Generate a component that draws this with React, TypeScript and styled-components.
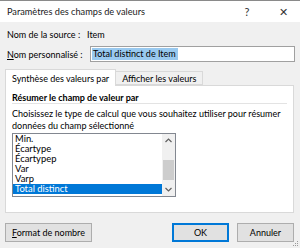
import React from 'react';
import styled, { createGlobalStyle } from 'styled-components';

const GlobalStyle = createGlobalStyle`
  html, body {
    margin: 0;
    padding: 0;
    background: #f0f0f0;
  }
  * {
    box-sizing: border-box;
  }
`;

const Window = styled.div`
  width: 300px;
  height: 248px;
  display: flex;
  flex-direction: column;
  background: #f0f0f0;
  border-top: 1px solid #8a8a8a;
  font-family: Lato, "Open Sans", sans-serif;
  font-size: 9px;
  color: #000;
  position: relative;
  overflow: hidden;
  white-space: nowrap;
`;

const TitleBar = styled.div`
  height: 21px;
  flex-shrink: 0;
  background: #fff;
  display: flex;
  align-items: center;
  padding: 0 3px 0 7px;
`;

const Title = styled.span`
  flex: 1;
  font-size: 9.2px;
  color: #1a1a1a;
`;

const TitleButton = styled.span<{ $w: number }>`
  width: ${p => p.$w}px;
  text-align: center;
  font-size: 11px;
  color: #333;
`;

const TitleGap = styled.div`
  width: 12px;
`;

const Body = styled.div`
  flex: 1;
  display: flex;
  flex-direction: column;
  padding: 0 5px;
`;

const FieldRow = styled.div<{ $h: number }>`
  height: ${p => p.$h}px;
  display: flex;
  align-items: center;
  padding-left: 2px;
`;

const Label = styled.span<{ $w: number }>`
  width: ${p => p.$w}px;
  flex-shrink: 0;
`;

const U = styled.span`
  text-decoration: underline;
`;

const Input = styled.div`
  flex: 1;
  height: 16px;
  background: #fff;
  border: 1px solid #a0a0a0;
  display: flex;
  align-items: center;
  padding-left: 1px;
`;

const Selected = styled.span`
  background: #99c9ef;
  line-height: 12px;
  padding: 0 2px 0 1px;
`;

const Tabs = styled.div`
  display: flex;
  align-items: flex-end;
  height: 17px;
  margin-top: 6px;
`;

const Tab = styled.div<{ $active?: boolean }>`
  height: ${p => (p.$active ? 17 : 14)}px;
  padding: 0 6px;
  display: flex;
  align-items: center;
  background: ${p => (p.$active ? '#fff' : '#f0f0f0')};
  border: 1px solid #d9d9d9;
  border-bottom: ${p => (p.$active ? 'none' : '1px solid #d9d9d9')};
  margin-left: ${p => (p.$active ? 0 : -1)}px;
  position: relative;
  z-index: ${p => (p.$active ? 1 : 0)};
  margin-bottom: ${p => (p.$active ? -1 : 0)}px;
`;

const Panel = styled.div`
  height: 128px;
  margin-right: 1px;
  background: #fff;
  border: 1px solid #d9d9d9;
  padding: 6px 6px 0 6px;
  display: flex;
  flex-direction: column;
`;

const Heading = styled.div`
  font-weight: 700;
  border-bottom: 1px solid #e3e3e3;
  line-height: 11px;
`;

const Description = styled.div`
  margin-top: 4px;
  line-height: 12px;
  white-space: normal;
`;

const ListBox = styled.div`
  margin-top: 1px;
  width: 164px;
  height: 64px;
  border: 1px solid #828790;
  display: flex;
`;

const Items = styled.div`
  flex: 1;
`;

const Item = styled.div<{ $selected?: boolean }>`
  height: 10px;
  line-height: 10px;
  font-size: 9.4px;
  padding-left: 2px;
  background: ${p => (p.$selected ? '#0078d7' : 'transparent')};
  color: ${p => (p.$selected ? '#fff' : '#000')};
`;

const ScrollBar = styled.div`
  width: 13px;
  background: #f0f0f0;
  display: flex;
  flex-direction: column;
  align-items: center;
`;

const Arrow = styled.div`
  height: 13px;
  display: flex;
  align-items: center;
  justify-content: center;
`;

const Thumb = styled.div`
  width: 11px;
  height: 20px;
  background: #cdcdcd;
  margin-top: 7px;
  margin-bottom: 3px;
`;

const Track = styled.div`
  flex: 1;
`;

const Footer = styled.div`
  display: flex;
  align-items: center;
  margin-top: 10px;
  padding-right: 1px;
  height: 19px;
`;

const Button = styled.div<{ $w: number; $default?: boolean }>`
  width: ${p => p.$w}px;
  height: 19px;
  background: #e1e1e1;
  border: 1px solid ${p => (p.$default ? '#0078d7' : '#adadad')};
  box-shadow: ${p => (p.$default ? 'inset 0 0 0 1px #0078d7' : 'none')};
  display: flex;
  align-items: center;
  justify-content: center;
`;

const Spacer = styled.div`
  flex: 1;
`;

const Gap = styled.div`
  width: 8px;
`;

const Grip = styled.svg`
  position: absolute;
  right: 1px;
  bottom: 1px;
`;

const ChevronUp = () => (
  <svg width="7" height="5" viewBox="0 0 7 5">
    <path d="M0.5 4 L3.5 1 L6.5 4" fill="none" stroke="#606060" strokeWidth="1.2" />
  </svg>
);

const ChevronDown = () => (
  <svg width="7" height="5" viewBox="0 0 7 5">
    <path d="M0.5 1 L3.5 4 L6.5 1" fill="none" stroke="#606060" strokeWidth="1.2" />
  </svg>
);

const items = ['Min.', 'Écartype', 'Écartypep', 'Var', 'Varp', 'Total distinct'];

const App: React.FC = () => {
  return (
    <>
      <GlobalStyle />
      <Window>
        <TitleBar>
          <Title>Paramètres des champs de valeurs</Title>
          <TitleButton $w={20}>?</TitleButton>
          <TitleGap />
          <TitleButton $w={28}>✕</TitleButton>
        </TitleBar>
        <Body>
          <FieldRow $h={24}>
            <Label $w={80}>Nom de la source :</Label>
            <span>Item</span>
          </FieldRow>
          <FieldRow $h={16}>
            <Label $w={83}>
              <U>N</U>om personnalisé :
            </Label>
            <Input>
              <Selected>Total distinct de Item</Selected>
            </Input>
          </FieldRow>
          <Tabs>
            <Tab $active>Synthèse des valeurs par</Tab>
            <Tab>Afficher les valeurs</Tab>
          </Tabs>
          <Panel>
            <Heading>Résumer le champ de valeur par</Heading>
            <Description>
              Choisissez le type de calcul que vous souhaitez utiliser pour résumer données du champ sélectionné
            </Description>
            <ListBox>
              <Items>
                {items.map((it, i) => (
                  <Item key={it} $selected={i === items.length - 1}>
                    {it}
                  </Item>
                ))}
              </Items>
              <ScrollBar>
                <Arrow>
                  <ChevronUp />
                </Arrow>
                <Track />
                <Thumb />
                <Arrow>
                  <ChevronDown />
                </Arrow>
              </ScrollBar>
            </ListBox>
          </Panel>
          <Footer>
            <Button $w={87}>
              <span>
                <U>F</U>ormat de nombre
              </span>
            </Button>
            <Spacer />
            <Button $w={57} $default>
              OK
            </Button>
            <Gap />
            <Button $w={57}>Annuler</Button>
          </Footer>
        </Body>
        <Grip width="7" height="7" viewBox="0 0 7 7">
          <rect x="5" y="1" width="1" height="1" fill="#9a9a9a" />
          <rect x="3" y="3" width="1" height="1" fill="#9a9a9a" />
          <rect x="5" y="3" width="1" height="1" fill="#9a9a9a" />
          <rect x="1" y="5" width="1" height="1" fill="#9a9a9a" />
          <rect x="3" y="5" width="1" height="1" fill="#9a9a9a" />
          <rect x="5" y="5" width="1" height="1" fill="#9a9a9a" />
        </Grip>
      </Window>
    </>
  );
};

export default App;
